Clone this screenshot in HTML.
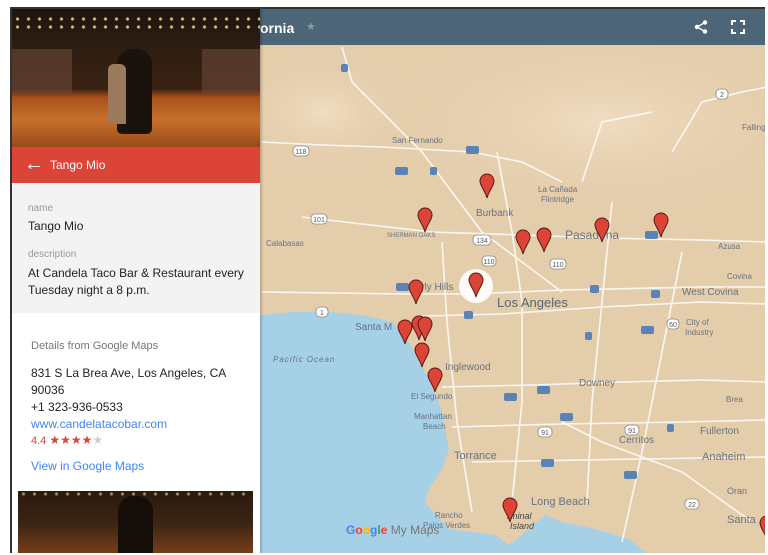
<!DOCTYPE html>
<html><head><meta charset="utf-8"><style>
body{margin:0;width:768px;height:555px;overflow:hidden;background:#fff;font-family:"Liberation Sans",Arial,sans-serif;position:relative}
#frame{position:absolute;left:10px;top:7px;width:755px;height:546px;border-left:2px solid #333;border-top:2px solid #333;box-sizing:border-box;overflow:hidden}
#map{position:absolute;left:0;top:0}
#topbar{position:absolute;left:248px;top:0;right:0;height:36px;background:#4d6677;color:#fff}
#panel{position:absolute;left:0;top:0;width:248px;height:546px;background:#fff;box-shadow:1px 0 3px rgba(0,0,0,.3)}
.photo{position:absolute;overflow:hidden}
.lbl{font-size:10px;color:#999}
.val{font-size:12px;color:#222}
</style></head><body>
<div id="frame">
<svg id="map" width="755" height="546" viewBox="10 7 755 546">
<defs><radialGradient id="hill" cx="50%" cy="50%" r="50%"><stop offset="0" stop-color="#f0dcc0"/><stop offset="1" stop-color="#e6cfae" stop-opacity="0"/></radialGradient></defs>
<rect x="0" y="0" width="780" height="560" fill="#e4cdab"/>
<ellipse cx="600" cy="120" rx="220" ry="90" fill="url(#hill)"/>
<ellipse cx="320" cy="110" rx="90" ry="60" fill="url(#hill)"/>
<polygon fill="#a5d0e6" points="258,313 293,310 327,310 360,313 390,320 407,340 417,360 427,377 440,410 447,447 440,467 427,487 423,500 447,527 493,533 507,543 520,533 543,513 560,520 593,527 627,537 647,553 258,553"/>
<g stroke="#fff" stroke-width="1.6" fill="none" opacity=".85">
<path d="M340,45 L350,80 L380,110 L420,150 L450,190 L480,230 L520,260 L560,290"/>
<path d="M260,140 L320,143 L380,145 L470,150 L520,160 L560,180"/>
<path d="M300,215 L360,222 L430,230 L520,233 L600,236 L700,238 L765,240"/>
<path d="M260,290 L400,292 L470,292 L560,288 L700,285 L765,285"/>
<path d="M420,314 L500,312 L600,305 L700,300 L765,302"/>
<path d="M440,385 L530,383 L620,380 L700,378 L765,380"/>
<path d="M450,425 L560,422 L680,420 L765,418"/>
<path d="M470,460 L580,458 L700,456 L765,455"/>
<path d="M495,150 L510,230 L520,300 L520,400 L510,500"/>
<path d="M610,200 L600,300 L590,400 L585,500"/>
<path d="M680,250 L660,350 L640,450 L620,540"/>
<path d="M440,240 L445,320 L455,420 L470,510"/>
<path d="M560,420 L600,440 L680,470 L750,520"/>
<path d="M670,150 L700,100 L740,90 L765,85"/>
<path d="M580,180 L600,120 L650,110"/>
</g>
<g font-family="Liberation Sans,sans-serif" fill="#6a7280">
<text x="495" y="305" font-size="13" fill="#5a6575">Los Angeles</text>
<text x="474" y="214" font-size="10">Burbank</text>
<text x="563" y="237" font-size="12">Pasadena</text>
<text x="536" y="190" font-size="8">La Cañada</text>
<text x="539" y="200" font-size="8">Flintridge</text>
<text x="390" y="141" font-size="8">San Fernando</text>
<text x="264" y="244" font-size="8">Calabasas</text>
<text x="385" y="235" font-size="6">SHERMAN OAKS</text>
<text x="403" y="288" font-size="10">everly Hills</text>
<text x="353" y="328" font-size="10">Santa M</text>
<text x="271" y="360" font-size="8" font-style="italic" letter-spacing="1">Pacific Ocean</text>
<text x="443" y="368" font-size="10">Inglewood</text>
<text x="409" y="397" font-size="8">El Segundo</text>
<text x="412" y="417" font-size="8">Manhattan</text>
<text x="421" y="427" font-size="8">Beach</text>
<text x="452" y="457" font-size="11">Torrance</text>
<text x="577" y="384" font-size="10">Downey</text>
<text x="617" y="441" font-size="10">Cerritos</text>
<text x="698" y="432" font-size="10">Fullerton</text>
<text x="700" y="458" font-size="11">Anaheim</text>
<text x="724" y="400" font-size="8">Brea</text>
<text x="680" y="293" font-size="10">West Covina</text>
<text x="725" y="277" font-size="8">Covina</text>
<text x="684" y="323" font-size="8">City of</text>
<text x="683" y="333" font-size="8">Industry</text>
<text x="716" y="247" font-size="8">Azusa</text>
<text x="529" y="503" font-size="11">Long Beach</text>
<text x="433" y="516" font-size="8">Rancho</text>
<text x="421" y="526" font-size="8">Palos Verdes</text>
<text x="505" y="517" font-size="9" font-style="italic" fill="#444">rminal</text>
<text x="508" y="527" font-size="9" font-style="italic" fill="#444">Island</text>
<text x="725" y="492" font-size="9">Oran</text>
<text x="725" y="521" font-size="11">Santa</text>
<text x="740" y="128" font-size="8">Falling</text>
</g>
<g font-family="Liberation Sans,sans-serif" font-size="7" text-anchor="middle">
<g fill="#fff" stroke="#888" stroke-width=".8"><rect x="291" y="144" width="16" height="10" rx="4"/><rect x="309" y="212" width="16" height="10" rx="4"/><rect x="314" y="305" width="12" height="10" rx="4"/><rect x="480" y="254" width="14" height="10" rx="4"/><rect x="548" y="257" width="16" height="10" rx="4"/><rect x="714" y="87" width="12" height="10" rx="4"/><rect x="536" y="425" width="14" height="10" rx="4"/><rect x="623" y="423" width="14" height="10" rx="4"/><rect x="683" y="497" width="14" height="10" rx="4"/><rect x="471" y="233" width="18" height="10" rx="4"/><rect x="665" y="317" width="12" height="10" rx="4"/></g>
<g fill="#555"><text x="299" y="152">118</text><text x="317" y="220">101</text><text x="320" y="313">1</text><text x="487" y="262">110</text><text x="556" y="265">110</text><text x="720" y="95">2</text><text x="543" y="433">91</text><text x="630" y="431">91</text><text x="690" y="505">22</text><text x="480" y="241">134</text><text x="671" y="325">60</text></g>
<g fill="#5a84b8"><rect x="339" y="62" width="7" height="8" rx="2"/><rect x="393" y="165" width="13" height="8" rx="2"/><rect x="428" y="165" width="7" height="8" rx="2"/><rect x="464" y="144" width="13" height="8" rx="2"/><rect x="394" y="281" width="13" height="8" rx="2"/><rect x="462" y="309" width="9" height="8" rx="2"/><rect x="588" y="283" width="9" height="8" rx="2"/><rect x="649" y="288" width="9" height="8" rx="2"/><rect x="639" y="324" width="13" height="8" rx="2"/><rect x="583" y="330" width="7" height="8" rx="2"/><rect x="535" y="384" width="13" height="8" rx="2"/><rect x="502" y="391" width="13" height="8" rx="2"/><rect x="558" y="411" width="13" height="8" rx="2"/><rect x="539" y="457" width="13" height="8" rx="2"/><rect x="622" y="469" width="13" height="8" rx="2"/><rect x="665" y="422" width="7" height="8" rx="2"/><rect x="643" y="229" width="13" height="8" rx="2"/></g>
</g>
<circle cx="474" cy="284" r="17" fill="#fff" opacity=".9"/>
<g fill="#db4437" stroke="#5a1a12" stroke-width="1">
<path id="m" d="M0,0 C-2,-8 -7,-12 -7,-17 A7,7 0 1 1 7,-17 C7,-12 2,-8 0,0Z" transform="translate(485,196)"/>
<use href="#m" transform="translate(-62,34)"/>
<use href="#m" transform="translate(36,56)"/>
<use href="#m" transform="translate(57,54)"/>
<use href="#m" transform="translate(115,44)"/>
<use href="#m" transform="translate(174,39)"/>
<use href="#m" transform="translate(-71,106)"/>
<use href="#m" transform="translate(-11,99)"/>
<use href="#m" transform="translate(-82,146)"/>
<use href="#m" transform="translate(-68,142)"/>
<use href="#m" transform="translate(-62,143)"/>
<use href="#m" transform="translate(-65,169)"/>
<use href="#m" transform="translate(-52,194)"/>
<use href="#m" transform="translate(23,324)"/>
<use href="#m" transform="translate(280,342)"/>
</g>
<text x="344" y="532" font-family="Liberation Sans,sans-serif" font-size="12" font-weight="bold"><tspan fill="#4285f4">G</tspan><tspan fill="#ea4335">o</tspan><tspan fill="#fbbc05">o</tspan><tspan fill="#4285f4">g</tspan><tspan fill="#34a853">l</tspan><tspan fill="#ea4335">e</tspan><tspan fill="#777" font-weight="normal"> My Maps</tspan></text>
</svg>
<div id="topbar">
<span style="position:absolute;left:0;top:11px;font-size:14px;font-weight:bold">ornia</span>
<span style="position:absolute;left:46px;top:11px;font-size:11px;color:#8a9aa6">★</span>
<svg style="position:absolute;left:434px;top:11px" width="14" height="14" viewBox="0 0 14 14"><circle cx="11" cy="2.5" r="2.2" fill="#fff"/><circle cx="3" cy="7" r="2.2" fill="#fff"/><circle cx="11" cy="11.5" r="2.2" fill="#fff"/><path d="M11,2.5 L3,7 L11,11.5" stroke="#fff" stroke-width="1.3" fill="none"/></svg>
<svg style="position:absolute;left:471px;top:11px" width="14" height="14" viewBox="0 0 14 14" fill="none" stroke="#fff" stroke-width="2"><path d="M1,5V1H5M9,1H13V5M13,9V13H9M5,13H1V9"/></svg>
</div>
<div id="panel">
<div class="photo" style="left:0;top:0;width:248px;height:138px;background:linear-gradient(180deg,#1e140c 0%,#2e1e12 30%,#3a2212 58%,#a8501a 64%,#c8702c 80%,#9a4a18 100%)">
<div style="position:absolute;left:0;top:6px;width:248px;height:16px;background:radial-gradient(circle,#ffdca0 1.2px,transparent 2px) 0 0/11px 8px;opacity:.8"></div>
<div style="position:absolute;left:0;top:40px;width:60px;height:45px;background:#6a4a38;opacity:.6"></div>
<div style="position:absolute;left:190px;top:40px;width:58px;height:45px;background:#6a4a38;opacity:.6"></div>
<div style="position:absolute;left:105px;top:40px;width:35px;height:85px;background:#1a120c;border-radius:15px 15px 5px 5px"></div>
<div style="position:absolute;left:96px;top:55px;width:18px;height:60px;background:#9a7a5a;border-radius:6px 6px 0 0"></div>
</div>
<div style="position:absolute;left:0;top:138px;width:248px;height:36px;background:#db4437;color:#fff">
<span style="position:absolute;left:12px;top:6px;font-size:20px">←</span>
<span style="position:absolute;left:38px;top:11px;font-size:12px">Tango Mio</span></div>
<div style="position:absolute;left:0;top:174px;width:248px;height:130px;background:#f3f3f3">
<div class="lbl" style="position:absolute;left:16px;top:20px">name</div>
<div class="val" style="position:absolute;left:16px;top:36px">Tango Mio</div>
<div class="lbl" style="position:absolute;left:16px;top:66px">description</div>
<div class="val" style="position:absolute;left:16px;top:82px;line-height:17px;width:225px">At Candela Taco Bar &amp; Restaurant every Tuesday night a 8 p.m.</div>
</div>
<div style="position:absolute;left:19px;top:331px;font-size:11px;color:#777">Details from Google Maps</div>
<div class="val" style="position:absolute;left:19px;top:356px;line-height:17px;width:220px">831 S La Brea Ave, Los Angeles, CA 90036<br>+1 323-936-0533<br><span style="color:#4285f4">www.candelatacobar.com</span></div>
<div style="position:absolute;left:19px;top:424px;font-size:11px;color:#db4437">4.4 <span style="font-size:12px">★★★★</span><span style="color:#ccc;font-size:12px">★</span></div>
<div style="position:absolute;left:19px;top:450px;font-size:12px;color:#4285f4">View in Google Maps</div>
<div class="photo" style="left:6px;top:482px;width:235px;height:64px;background:linear-gradient(180deg,#2a1a0e,#3a2414 50%,#7a4018)">
<div style="position:absolute;left:0;top:0;width:235px;height:6px;background:radial-gradient(circle,#ffdca0 1px,transparent 2px) 0 0/11px 6px;opacity:.6"></div>
<div style="position:absolute;left:100px;top:5px;width:35px;height:60px;background:#150e08;border-radius:15px 15px 0 0"></div></div>
</div>
</div>
</body></html>
